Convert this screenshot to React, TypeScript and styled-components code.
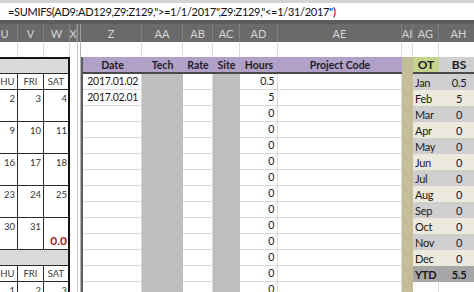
import React from "react";
import styled, { createGlobalStyle } from "styled-components";

const FONT = `Lato, "Open Sans", "Liberation Sans", sans-serif`;

const GlobalStyle = createGlobalStyle`
  html, body { margin: 0; padding: 0; background: #ffffff; }
  body { font-family: ${FONT}; color: #1a1a1a; }
  * { box-sizing: border-box; }
`;

const Window = styled.div`
  width: 474px;
  height: 292px;
  overflow: hidden;
  display: flex;
  flex-direction: column;
  background: #ffffff;
`;

const FormulaBar = styled.div`
  height: 24px;
  flex: none;
  border-top: 3px solid #d4d4d4;
  border-bottom: 4px solid #5c5c5c;
  background: #ffffff;
  display: flex;
  align-items: center;
  padding-left: 8px;
  font-size: 11px;
  letter-spacing: -0.3px;
  color: #111111;
  white-space: nowrap;
`;

const HeaderStrip = styled.div`
  height: 18px;
  flex: none;
  display: flex;
  background: #6a6a6a;
  margin-left: -8px;
`;

const ColLetter = styled.div<{ $w: number }>`
  width: ${(p) => p.$w}px;
  flex: none;
  display: flex;
  align-items: center;
  justify-content: center;
  color: #d6d6d6;
  font-size: 11px;
  border-right: 1px solid #808080;
  overflow: hidden;
`;

const FreezeHead = styled.div`
  width: 4px;
  flex: none;
  border-left: 1px solid #9a9a9a;
  border-right: 1px solid #9a9a9a;
`;

const Body = styled.div`
  flex: 1;
  display: flex;
  margin-left: -8px;
  overflow: hidden;
`;

const Pane = styled.div<{ $w: number }>`
  width: ${(p) => p.$w}px;
  flex: none;
  display: flex;
  flex-direction: column;
`;

const BlankRow = styled.div`
  height: 15px;
  flex: none;
  display: flex;
`;

const BlankCell = styled.div<{ $w: number }>`
  width: ${(p) => p.$w}px;
  flex: none;
  border-right: 1px solid #dcdcdc;
`;

/* ---------- calendar ---------- */

const CalendarBox = styled.div<{ $top?: boolean }>`
  border-right: 2px solid #141414;
  border-top: ${(p) => (p.$top ? "2px solid #141414" : "none")};
  flex: none;
`;

const CalTitle = styled.div<{ $h: number }>`
  height: ${(p) => p.$h}px;
  background: #d9d9d9;
  border-bottom: 1px solid #2a2a2a;
`;

const CalRow = styled.div<{ $h: number }>`
  height: ${(p) => p.$h}px;
  display: grid;
  grid-template-columns: 26px 26px 24px;
  border-bottom: 1px solid #2a2a2a;
`;

const DayName = styled.div`
  display: flex;
  align-items: center;
  justify-content: center;
  font-size: 9.5px;
  color: #3a3a3a;
  border-right: 1px solid #2a2a2a;
  &:last-child { border-right: none; }
`;

const DateCell = styled.div`
  display: flex;
  flex-direction: column;
  align-items: flex-end;
  justify-content: space-between;
  padding: 3px 2px 1px 0;
  font-size: 9.5px;
  line-height: 11px;
  color: #333333;
  border-right: 1px solid #2a2a2a;
  &:last-child { border-right: none; padding-right: 1px; }
`;

const Total = styled.span`
  color: #a31b1b;
  font-weight: 700;
  font-size: 12px;
  line-height: 14px;
`;

const WhiteStrip = styled.div`
  flex: 1;
  background: #ffffff;
`;

const Freeze = styled.div`
  width: 4px;
  flex: none;
  border-left: 1px solid #c6c6c6;
  border-right: 1px solid #b4b4b4;
`;

/* ---------- data table ---------- */

const TABLE_COLS = "59px 41px 30px 27px 38px 124px";

const TableBox = styled.div`
  flex: 1;
  border-left: 2px solid #5e5e5e;
  display: flex;
  flex-direction: column;
`;

const HeadRow = styled.div<{ $cols: string }>`
  height: 17px;
  flex: none;
  display: grid;
  grid-template-columns: ${(p) => p.$cols};
  border-bottom: 2px solid #4a4a4a;
`;

const HeadCell = styled.div<{ $bg: string; $size?: number }>`
  background: ${(p) => p.$bg};
  display: flex;
  align-items: center;
  justify-content: center;
  font-size: ${(p) => p.$size ?? 10.5}px;
  font-weight: 700;
  color: #1e1e28;
`;

const DataRow = styled.div<{ $cols: string }>`
  height: 16px;
  flex: none;
  display: grid;
  grid-template-columns: ${(p) => p.$cols};
`;

const Cell = styled.div<{ $fill?: boolean; $align?: "left" | "right" | "center" }>`
  background: ${(p) => (p.$fill ? "#bfbfbf" : "#ffffff")};
  border-right: 1px solid ${(p) => (p.$fill ? "#bfbfbf" : "#dadada")};
  border-bottom: 1px solid ${(p) => (p.$fill ? "#bfbfbf" : "#dadada")};
  display: flex;
  align-items: flex-end;
  justify-content: ${(p) =>
    p.$align === "left" ? "flex-start" : p.$align === "center" ? "center" : "flex-end"};
  padding: 0 3px 1px 3px;
  font-size: 10.5px;
  letter-spacing: -0.3px;
  line-height: 13px;
  color: #1a1a1a;
  white-space: nowrap;
  overflow: hidden;
`;

const TanStripe = styled.div`
  flex: 1;
  background: #c4bd97;
`;

/* ---------- summary ---------- */

const SUM_COLS = "26px 40px";

const SumRow = styled.div<{ $bg: string; $bold?: boolean }>`
  height: 16px;
  flex: none;
  display: grid;
  grid-template-columns: ${SUM_COLS};
  background: ${(p) => p.$bg};
  font-weight: ${(p) => (p.$bold ? 700 : 400)};
`;

const MonthCell = styled.div`
  display: flex;
  align-items: flex-end;
  padding: 0 0 1px 2px;
  font-size: 11px;
  letter-spacing: -0.3px;
  line-height: 13px;
  color: #1a1a1a;
`;

const ValueCell = styled.div`
  display: flex;
  align-items: flex-end;
  justify-content: center;
  padding-bottom: 1px;
  font-size: 11px;
  letter-spacing: -0.3px;
  line-height: 13px;
  color: #1a1a1a;
`;

const WhiteRow = styled.div`
  height: 16px;
  flex: none;
  display: grid;
  grid-template-columns: ${SUM_COLS};
  & > div {
    border-right: 1px solid #dadada;
    border-bottom: 1px solid #dadada;
  }
`;

const HEAD_COLS: [string, number][] = [
  ["U", 26],
  ["V", 26],
  ["W", 26],
  ["X", 7],
];
const HEAD_COLS2: [string, number][] = [
  ["Z", 61],
  ["AA", 41],
  ["AB", 30],
  ["AC", 27],
  ["AD", 38],
  ["AE", 124],
  ["AI", 11],
  ["AG", 26],
  ["AH", 40],
];

const WEEKS: (number | string)[][] = [
  [2, 3, 4],
  [9, 10, 11],
  [16, 17, 18],
  [23, 24, 25],
  [30, 31, ""],
];

const DAYS = ["THU", "FRI", "SAT"];

const ROWS = [
  { date: "2017.01.02", hours: "0.5" },
  { date: "2017.02.01", hours: "5" },
  ...Array.from({ length: 12 }, () => ({ date: "", hours: "0" })),
];

const MONTHS: [string, string][] = [
  ["Jan", "0.5"],
  ["Feb", "5"],
  ["Mar", "0"],
  ["Apr", "0"],
  ["May", "0"],
  ["Jun", "0"],
  ["Jul", "0"],
  ["Aug", "0"],
  ["Sep", "0"],
  ["Oct", "0"],
  ["Nov", "0"],
  ["Dec", "0"],
];

export default function App() {
  return (
    <>
      <GlobalStyle />
      <Window>
        <FormulaBar>
          {'=SUMIFS(AD9:AD129,Z9:Z129,">=1/1/2017",Z9:Z129,"<=1/31/2017")'}
        </FormulaBar>
        <HeaderStrip>
          {HEAD_COLS.map(([l, w]) => (
            <ColLetter key={l} $w={w}>
              {l}
            </ColLetter>
          ))}
          <FreezeHead />
          {HEAD_COLS2.map(([l, w]) => (
            <ColLetter key={l} $w={w}>
              {l}
            </ColLetter>
          ))}
        </HeaderStrip>
        <Body>
          {/* calendar columns U V W */}
          <Pane $w={78}>
            <BlankRow>
              <BlankCell $w={26} />
              <BlankCell $w={26} />
              <BlankCell $w={26} />
            </BlankRow>
            <CalendarBox $top>
              <CalTitle $h={15} />
              <CalRow $h={16}>
                {DAYS.map((d) => (
                  <DayName key={d}>{d}</DayName>
                ))}
              </CalRow>
              {WEEKS.map((w, i) => (
                <CalRow key={i} $h={32}>
                  {w.map((n, j) => (
                    <DateCell key={j}>
                      <span>{n}</span>
                      {i === 4 && j === 2 ? <Total>0.0</Total> : null}
                    </DateCell>
                  ))}
                </CalRow>
              ))}
            </CalendarBox>
            <CalendarBox>
              <CalTitle $h={16} />
              <CalRow $h={16}>
                {DAYS.map((d) => (
                  <DayName key={d}>{d}</DayName>
                ))}
              </CalRow>
              <CalRow $h={32}>
                {[1, 2, 3].map((n) => (
                  <DateCell key={n}>
                    <span>{n}</span>
                  </DateCell>
                ))}
              </CalRow>
            </CalendarBox>
          </Pane>
          {/* column X */}
          <Pane $w={7}>
            <WhiteStrip />
          </Pane>
          <Freeze />
          {/* data table */}
          <Pane $w={321}>
            <BlankRow>
              {[61, 41, 30, 27, 38, 124].map((w, i) => (
                <BlankCell key={i} $w={w} />
              ))}
            </BlankRow>
            <TableBox>
              <HeadRow $cols={TABLE_COLS}>
                {["Date", "Tech", "Rate", "Site", "Hours", "Project Code"].map((h) => (
                  <HeadCell key={h} $bg="#b1a0c7">
                    {h}
                  </HeadCell>
                ))}
              </HeadRow>
              {ROWS.map((r, i) => (
                <DataRow key={i} $cols={TABLE_COLS}>
                  <Cell>{r.date}</Cell>
                  <Cell $fill />
                  <Cell />
                  <Cell $fill />
                  <Cell>{r.hours}</Cell>
                  <Cell />
                </DataRow>
              ))}
            </TableBox>
          </Pane>
          {/* column AI */}
          <Pane $w={11}>
            <BlankRow>
              <BlankCell $w={11} />
            </BlankRow>
            <TanStripe />
          </Pane>
          {/* summary AG AH */}
          <Pane $w={66}>
            <BlankRow>
              <BlankCell $w={26} />
              <BlankCell $w={40} />
            </BlankRow>
            <HeadRow $cols={SUM_COLS}>
              <HeadCell $bg="#c4d38e" $size={12}>OT</HeadCell>
              <HeadCell $bg="#d0d0d0" $size={12}>BS</HeadCell>
            </HeadRow>
            {MONTHS.map(([m, v], i) => (
              <SumRow key={m} $bg={i % 2 === 0 ? "#cfcfcf" : "#ece9de"}>
                <MonthCell>{m}</MonthCell>
                <ValueCell>{v}</ValueCell>
              </SumRow>
            ))}
            <SumRow $bg="#a6a6a6" $bold>
              <MonthCell>YTD</MonthCell>
              <ValueCell>5.5</ValueCell>
            </SumRow>
            <WhiteRow>
              <div />
              <div />
            </WhiteRow>
          </Pane>
        </Body>
      </Window>
    </>
  );
}
